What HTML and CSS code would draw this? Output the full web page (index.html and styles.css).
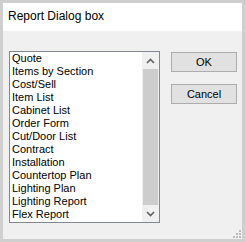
FILE: index.html
```html
<!DOCTYPE html>
<html lang="en">
<head>
  <meta charset="UTF-8">
  <title>Report Dialog box</title>
  <link rel="stylesheet" href="styles.css">
</head>
<body>
  <div class="window">
    <div class="title-bar">Report Dialog box</div>

    <div class="dialog-body">
      <div class="listbox">
        <ul class="report-list">
          <li>Quote</li>
          <li>Items by Section</li>
          <li>Cost/Sell</li>
          <li>Item List</li>
          <li>Cabinet List</li>
          <li>Order Form</li>
          <li>Cut/Door List</li>
          <li>Contract</li>
          <li>Installation</li>
          <li>Countertop Plan</li>
          <li>Lighting Plan</li>
          <li>Lighting Report</li>
          <li>Flex Report</li>
        </ul>
        <div class="scrollbar">
          <div class="scroll-arrow">
            <svg width="9" height="6" viewBox="0 0 9 6"><path d="M1 5 L4.5 1.5 L8 5" fill="none" stroke="#606060" stroke-width="1.6"/></svg>
          </div>
          <div class="scroll-thumb"></div>
          <div class="scroll-arrow">
            <svg width="9" height="6" viewBox="0 0 9 6"><path d="M1 1 L4.5 4.5 L8 1" fill="none" stroke="#606060" stroke-width="1.6"/></svg>
          </div>
        </div>
      </div>

      <div class="buttons">
        <button class="dlg-btn">OK</button>
        <button class="dlg-btn">Cancel</button>
      </div>

      <!-- size grip -->
      <svg class="grip" width="10" height="10" viewBox="0 0 10 10">
        <rect x="7" y="1" width="2" height="2" fill="#bcbcbc"/>
        <rect x="4" y="4" width="2" height="2" fill="#bcbcbc"/>
        <rect x="7" y="4" width="2" height="2" fill="#bcbcbc"/>
        <rect x="1" y="7" width="2" height="2" fill="#bcbcbc"/>
        <rect x="4" y="7" width="2" height="2" fill="#bcbcbc"/>
        <rect x="7" y="7" width="2" height="2" fill="#bcbcbc"/>
      </svg>
    </div>
  </div>
</body>
</html>
```

FILE: styles.css
```css
* {
  box-sizing: border-box;
}

body {
  margin: 0;
  padding: 0;
  background: #cfcfcf;
}

.window {
  width: 245px;
  height: 242px;
  border: 3px solid #cfcfcf;
  display: flex;
  flex-direction: column;
  background: #f0f0f0;
}

.title-bar {
  height: 28px;
  background: white;
  padding: 6px 0 0 5px;
  font-family: "Liberation Sans", Arial, sans-serif;
  font-size: 12px;
  color: #000;
}

.dialog-body {
  position: relative;
  flex: 1;
  display: flex;
  align-items: flex-start;
  padding: 20px 0 0 6px;
  gap: 11px;
}

.listbox {
  width: 151px;
  height: 172px;
  border: 1px solid #828790;
  background: white;
  display: flex;
}

.report-list {
  flex: 1;
  list-style: none;
  margin: 0;
  padding: 0 0 0 2px;
  font-family: "Liberation Sans", Arial, sans-serif;
  font-size: 11px;
  color: #000;
}

.report-list li {
  height: 13px;
  line-height: 13px;
  white-space: nowrap;
}

.scrollbar {
  width: 17px;
  background: #f0f0f0;
  display: flex;
  flex-direction: column;
}

.scroll-arrow {
  height: 17px;
  display: flex;
  align-items: center;
  justify-content: center;
}

.scroll-thumb {
  flex: 1;
  margin: 0 1px;
  background: #cdcdcd;
}

.buttons {
  display: flex;
  flex-direction: column;
  gap: 12px;
  padding-top: 1px;
}

.dlg-btn {
  width: 66px;
  height: 20px;
  margin: 0;
  padding: 0;
  background: #e1e1e1;
  border: 1px solid #adadad;
  font-family: "Liberation Sans", Arial, sans-serif;
  font-size: 11px;
  color: #000;
}

/* resize grip in the corner */
.grip {
  position: absolute;
  right: 0;
  bottom: 0;
}
```
